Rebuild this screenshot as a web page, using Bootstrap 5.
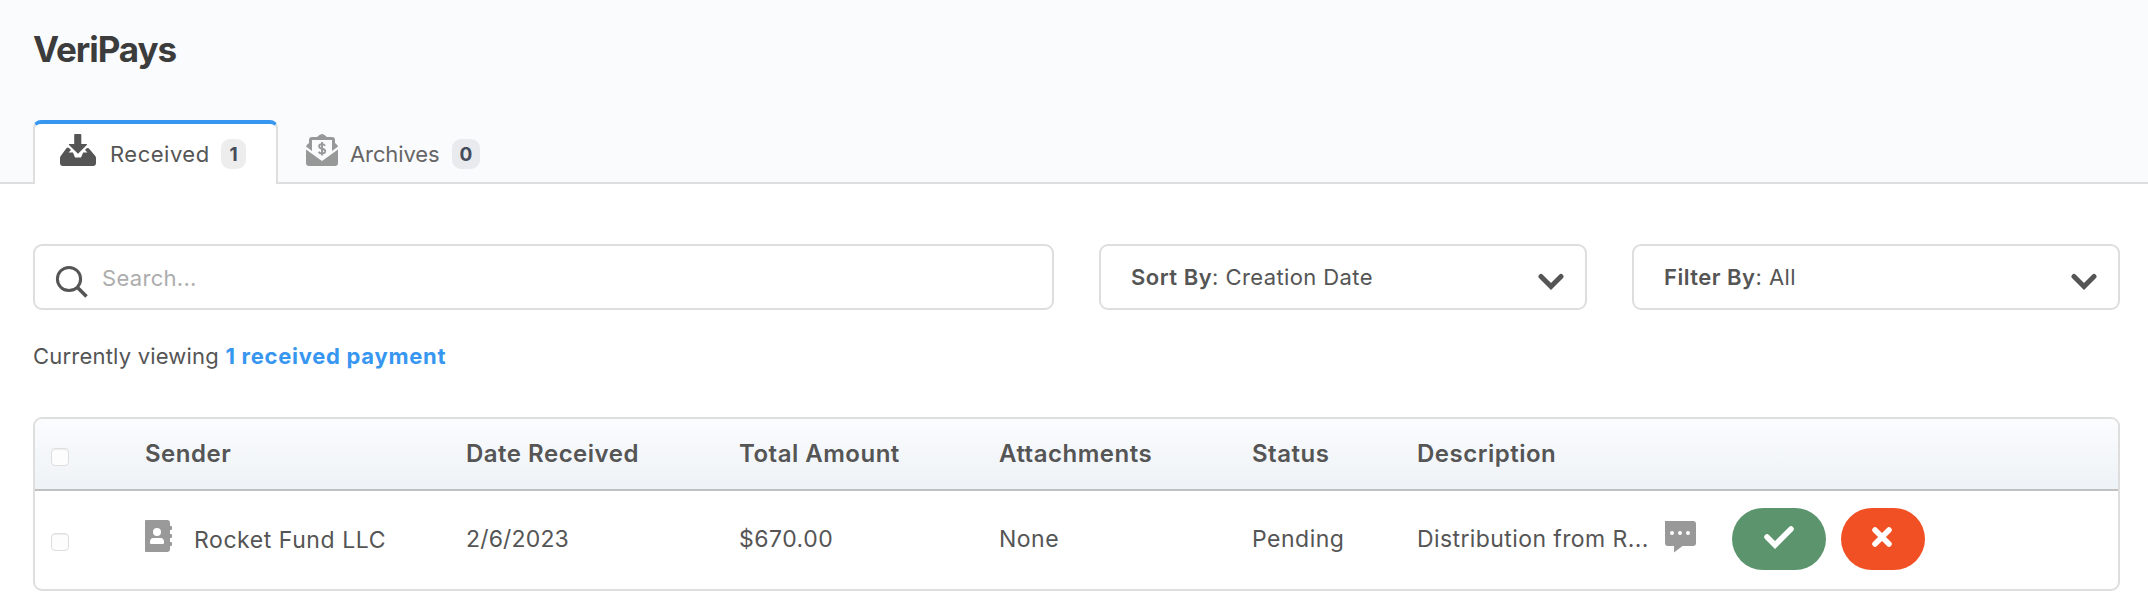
<!DOCTYPE html>
<html lang="en">
<head>
<meta charset="utf-8">
<meta name="viewport" content="width=device-width, initial-scale=1">
<title>VeriPays</title>
<link href="https://cdn.jsdelivr.net/npm/bootstrap@5.3.0/dist/css/bootstrap.min.css" rel="stylesheet">
<style>
body{font-family:Inter,"Liberation Sans",sans-serif;color:#555;font-size:22px;line-height:32px;letter-spacing:.6px;background:#fff}
.page-top{background:#fafbfd;height:184px;padding:0 33px;border-bottom:2px solid #dedede}
.page-title{font-size:35px;line-height:40px;font-weight:700;color:#3c3c3c;letter-spacing:-1.05px;margin:0;padding-top:29px;height:120px}
.pay-tabs{border:0;height:64px;flex-wrap:nowrap}
.pay-tabs .nav-link{height:64px;border:2px solid transparent;border-radius:8px 8px 0 0;margin:0;color:#666;display:flex;align-items:flex-start;padding:0}
.pay-tabs .nav-link.active{width:245px;background:#fff;color:#555;border-color:#dedede;border-top:4px solid #3797f0;border-bottom:0}
.tab-text{line-height:30px;margin-top:15px;letter-spacing:.5px}
.nav-link:not(.active) .tab-text{margin-top:17px;letter-spacing:-.1px}
.count-chip{height:30px;border-radius:9px;background:#ededed;color:#454c5a;font-size:19px;font-weight:700;line-height:32px;padding:0;text-align:center;letter-spacing:0}
.field-box{height:66px;border:2px solid #dedede;border-radius:9px;background:#fff;display:flex;align-items:flex-start}
.field-box input{border:0;outline:0;background:none;padding:0;color:#555;letter-spacing:.3px;height:32px}
.field-box input::placeholder{color:#adadad;opacity:1}
.controls{padding:60px 28px 0 33px;display:grid;grid-template-columns:1021px 488px 488px;column-gap:45px}
.pick{padding:15px 21px 0 30px;justify-content:space-between;letter-spacing:.4px}
.pick b{font-weight:600;letter-spacing:.5px}
.summary{margin:0 33px;padding-top:30px;height:107px;letter-spacing:.2px}
.summary b{color:#3797f0;font-weight:700;letter-spacing:.72px}
.pay-card{margin:0 28px 0 33px;height:174px;border:2px solid #dedede;border-radius:9px;overflow:hidden}
.pay-table{table-layout:fixed;width:100%;margin:0;border-collapse:separate;border-spacing:0}
.pay-table th,.pay-table td{padding:0;border:0;color:#555;white-space:nowrap;vertical-align:top;background:transparent}
.pay-table thead{background:linear-gradient(#fbfcfe,#edf2f6)}
.pay-table th{height:72px;padding-top:19px;font-weight:600;font-size:24px;border-bottom:2px solid #c0c0c0;letter-spacing:.5px}
.pay-table td{height:98px;padding-top:32px;font-size:23px;letter-spacing:.5px}
.tick{display:block;width:18px;height:18px;margin:10px 0 0 16px;border:1px solid #dedede;border-radius:4px;background:#fdfdfd;appearance:none;box-shadow:inset 0 1px 1px #eee}
.pill{border:0;border-radius:31px;height:62px;padding:0;display:flex;align-items:center;justify-content:center}
.pill-yes{width:94px;background:#5b946d}
.pill-no{width:84px;background:#f15025}
</style>
<script src="https://cdn.jsdelivr.net/npm/bootstrap@5.3.0/dist/js/bootstrap.bundle.min.js"></script>
</head>
<body>
<header class="page-top">
  <h1 class="page-title">VeriPays</h1>
  <ul class="nav nav-tabs pay-tabs">
    <li class="nav-item"><a class="nav-link active" href="#">
      <svg width="36" height="32" viewBox="0 0 36 32" style="margin:10px 14px 0 25px" fill="#555"><path d="M15 0h5.500a.8.8 0 0 1 .8.800V10h5.200q1 .1.300.900L18 19.800 9 10.900q-.7-.8.300-.900H14.200V.8Q14.200 0 15 0Z"/><path d="M7.300 13.500Q8.500 13.500 9.300 14.300L11 16 8.500 18.500H13L15 23.500H21L23.200 18.500H27.500L25 16 26.700 14.300Q27.500 13.500 28.700 14.300L35.300 22Q36 23 36 24V29Q36 32 33 32H3Q0 32 0 29V24Q0 23 .7 22L6.200 14.500Z"/></svg>
      <span class="tab-text" style="width:111px">Received</span><span class="count-chip" style="width:25px;margin-top:15px">1</span></a></li>
    <li class="nav-item"><a class="nav-link" href="#">
      <svg width="32" height="32" viewBox="0 0 32 32" style="margin:12px 12px 0 26px" fill="#969998"><path d="M0 15.500 16 27 32 15.500V29Q32 32 29 32H3Q0 32 0 29Z"/><path d="M3 6Q3 3 6 3H11Q14 0 16 0T21 3H26Q29 3 29 6V9Q32 11 32 12.500L26 17V6H6V17L0 12.500Q0 11 3 9Z"/><path fill="none" stroke="#969998" stroke-width="1.900" d="M19 11.700Q18 10 15.800 10.100 13 10.300 13.200 12.500 13.400 14.300 16 14.800 19.300 15.400 19.200 17.400 18.900 19.500 16 19.500 13.600 19.500 12.700 17.800M16 8V21.500"/></svg>
      <span class="tab-text" style="width:102px">Archives</span><span class="count-chip" style="width:28px;margin-top:17px;background:#e8eaed">0</span></a></li>
  </ul>
</header>
<main>
  <div class="controls">
    <label class="field-box"><svg width="34" height="34" viewBox="0 0 34 34" style="margin:19px 13px 0 20px" fill="none" stroke="#555"><circle cx="14" cy="14" r="11.600" stroke-width="3"/><path d="m22.500 22.500 9 9" stroke-width="3.500"/></svg><input type="text" placeholder="Search..." style="margin-top:16px"></label>
    <div class="field-box pick"><span><b>Sort By</b>: Creation Date</span><svg width="26" height="20" viewBox="0 0 26 20" style="margin-top:11px" fill="none" stroke="#555" stroke-width="5" stroke-linecap="round"><path d="m3 4.500 10 10 10-10"/></svg></div>
    <div class="field-box pick"><span><b>Filter By</b>: All</span><svg width="26" height="20" viewBox="0 0 26 20" style="margin-top:11px" fill="none" stroke="#555" stroke-width="5" stroke-linecap="round"><path d="m3 4.500 10 10 10-10"/></svg></div>
  </div>
  <p class="summary"><span>Currently viewing </span><b>1 received payment</b></p>
  <div class="pay-card">
    <table class="table pay-table">
      <colgroup><col style="width:110px"><col style="width:321px"><col style="width:273px"><col style="width:260px"><col style="width:253px"><col style="width:165px"><col></colgroup>
      <thead><tr><th><input class="tick" type="checkbox" aria-label="Select all"></th><th>Sender</th><th>Date Received</th><th>Total Amount</th><th>Attachments</th><th>Status</th><th>Description</th></tr></thead>
      <tbody><tr>
        <td><input class="tick" type="checkbox" aria-label="Select row"></td>
        <td><div class="d-flex"><svg width="28" height="33" viewBox="0 0 28 33" style="margin:-3px 21px 0 0"><path fill="#999" d="M1 0H22Q25 0 25 3V6H26Q27 6 27 7V9Q27 10 26 10H25V14H26Q27 14 27 15V17Q27 18 26 18H25V22H26Q27 22 27 23V25Q27 26 26 26H25V29Q25 32 22 32H1Q0 32 0 31V1Q0 0 1 0Z"/><circle cx="12" cy="12" r="4" fill="#fff"/><path fill="#fff" d="M5 22Q5 18 8.500 18H15.500Q19 18 19 22V23Q19 24 18 24H6Q5 24 5 23Z"/></svg><span style="margin-top:1px;letter-spacing:.56px">Rocket Fund LLC</span></div></td>
        <td><span style="letter-spacing:.17px">2/6/2023</span></td><td>$670.00</td><td>None</td><td>Pending</td>
        <td><div class="d-flex"><span style="width:248px;letter-spacing:.4px">Distribution from R...</span><svg width="31" height="32" viewBox="0 0 31 32" style="margin:-2px 36px 0 0"><path fill="#999" d="M0 0H28Q31 0 31 3V22Q31 25 28 25H17.500L9 31.500V25H3Q0 25 0 22Z"/><g fill="#fff"><circle cx="7" cy="12" r="2"/><circle cx="15" cy="12" r="2"/><circle cx="23" cy="12" r="2"/></g></svg>
        <div class="d-flex" style="margin-top:-15px;gap:15px"><button class="pill pill-yes" aria-label="Accept"><svg width="32" height="24" viewBox="0 0 32 24" style="margin-top:-4px" fill="none" stroke="#fff" stroke-width="5.500" stroke-linecap="round"><path d="m4 12 8 8L28 4"/></svg></button><button class="pill pill-no" aria-label="Decline"><svg width="22" height="22" viewBox="0 0 22 22" style="margin:-4px 2px 0 0" fill="none" stroke="#fff" stroke-width="5.500" stroke-linecap="round"><path d="m4 4 14 14M18 4 4 18"/></svg></button></div></div></td>
      </tr></tbody>
    </table>
  </div>
</main>
</body>
</html>
